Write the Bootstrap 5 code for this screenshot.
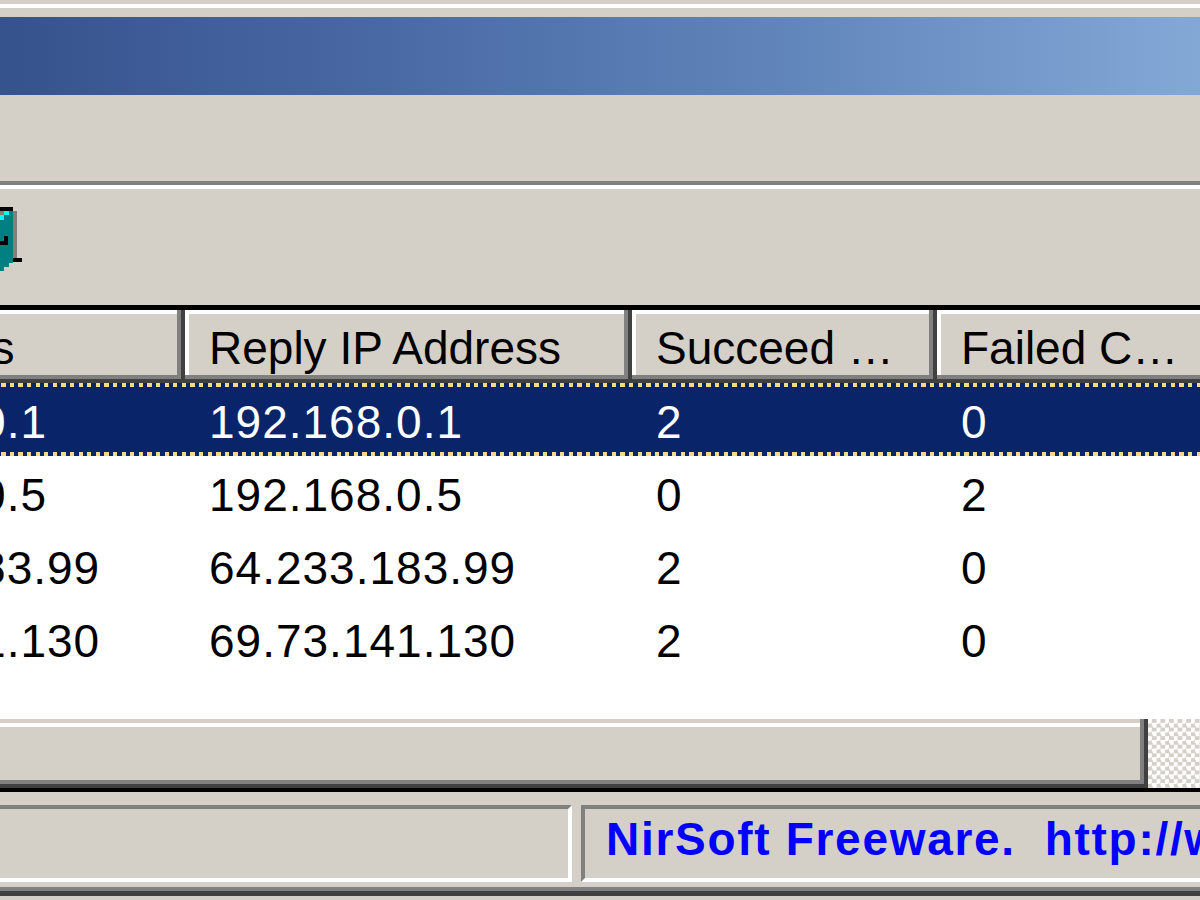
<!DOCTYPE html>
<html lang="en">
<head>
<meta charset="utf-8">
<title>NirSoft</title>
<link href="https://cdn.jsdelivr.net/npm/bootstrap@5.3.0/dist/css/bootstrap.min.css" rel="stylesheet">
<style>
html,body{height:900px;overflow:hidden;margin:0;background:#d4d0c8;}
body{font-family:"Liberation Sans",Arial,sans-serif;color:#000;}
.frame-top{height:17px;border-top:4px solid #d4d0c8;background:linear-gradient(#fff 0 4px,#d4d0c8 4px);}
.title-strip{height:78px;background:linear-gradient(90deg,#36528d 0%,#4a6aa5 33%,#6186bb 66%,#84a8d6 100%);}
.menu-strip{height:86px;background:#d4d0c8;}
.tool-strip{height:129px;background:#d4d0c8;border-top:4px solid #808080;box-shadow:inset 0 4px 0 #fff;border-bottom:5px solid #000;padding-top:22px;}
.tool-ico{display:block;width:22px;height:64px;}
.list-pane{height:409px;background:#fff;overflow:hidden;}
.ping-table{width:1448px;margin:0 0 0 -231px;table-layout:fixed;border-collapse:separate;border-spacing:0;font-size:46px;line-height:1;--bs-table-bg:transparent;--bs-table-color:#000;}
.ping-table>:not(caption)>*>*{padding:0 0 0 24px;border:0;white-space:nowrap;overflow:hidden;vertical-align:middle;box-shadow:none;color:#000;}
.ping-table>thead>tr>th{height:73px;background:#d4d0c8;font-weight:400;padding-top:2px;letter-spacing:0;box-shadow:inset -4px -4px 0 #404040,inset -8px -8px 0 #808080,inset 4px 4px 0 #fff;}
.ping-table>tbody>tr>td{height:73px;padding-top:4px;letter-spacing:1px;}
.row-picked{background-color:#0a246a;background-image:repeating-linear-gradient(90deg,#f6d78c 0 4.3px,#0a246a 4.3px 8.6px),repeating-linear-gradient(90deg,#f6d78c 0 4.3px,#0a246a 4.3px 8.6px);background-size:100% 4px,100% 4px;background-position:0 0,0 100%;background-repeat:no-repeat;}
.ping-table>tbody>.row-picked>td{color:#fff;}
.hscroll{height:69px;background:#fff;}
.hthumb{width:1148px;background:#d4d0c8;box-shadow:inset -4px -4px 0 #404040,inset -8px -8px 0 #808080,inset 0 4px 0 #d4d0c8,inset 0 8px 0 #fff;}
.hcheck{flex:1;background-color:#fff;background-image:conic-gradient(#d4d0c8 25%,#fff 0 50%,#d4d0c8 0 75%,#fff 0);background-size:8.6px 8.6px;}
.status-wrap{height:108px;background:#d4d0c8;border-top:4px solid #000;padding-top:13px;gap:9px;box-shadow:inset 0 -5px 0 #404040,inset 0 -9px 0 #808080;}
.stat-a,.stat-b{height:77px;background:#d4d0c8;border-top:4px solid #808080;border-bottom:4px solid #fff;}
.stat-a{width:572px;border-right:4px solid #fff;}
.stat-b{flex:1;border-left:4px solid #808080;padding-left:21px;overflow:hidden;white-space:nowrap;color:#0000ff;font-weight:700;font-size:46px;line-height:61px;letter-spacing:1.7px;}
</style>
</head>
<body>
<div class="d-flex flex-column">
  <div class="frame-top"></div>
  <div class="title-strip"></div>
  <div class="menu-strip"></div>
  <div class="tool-strip">
    <svg class="tool-ico" viewBox="0 0 22 64" shape-rendering="crispEdges" aria-hidden="true">
      <rect x="0" y="0" width="13" height="4" fill="#000"/>
      <rect x="0" y="4" width="13" height="52" fill="#008080"/>
      <rect x="0" y="56" width="9" height="4" fill="#008080"/>
      <rect x="0" y="60" width="4" height="4" fill="#008080"/>
      <rect x="13" y="4" width="4" height="47" fill="#808080"/>
      <rect x="13" y="51" width="9" height="4" fill="#000"/>
      <rect x="0" y="4" width="4" height="5" fill="#808080"/>
      <rect x="4" y="4" width="5" height="4" fill="#00ffff"/>
      <rect x="0" y="8" width="4" height="5" fill="#00ffff"/>
      <rect x="4" y="29" width="4" height="9" fill="#000"/>
      <rect x="0" y="34" width="8" height="4" fill="#000"/>
    </svg>
  </div>
  <div class="list-pane">
    <table class="table ping-table">
      <colgroup><col style="width:416px"><col style="width:447px"><col style="width:305px"><col style="width:280px"></colgroup>
      <thead>
        <tr><th>IP Address</th><th>Reply IP Address</th><th>Succeed …</th><th>Failed C…</th></tr>
      </thead>
      <tbody>
        <tr class="row-picked"><td>192.168.0.1</td><td>192.168.0.1</td><td>2</td><td>0</td></tr>
        <tr><td>192.168.0.5</td><td>192.168.0.5</td><td>0</td><td>2</td></tr>
        <tr><td>64.233.183.99</td><td>64.233.183.99</td><td>2</td><td>0</td></tr>
        <tr><td>69.73.141.130</td><td>69.73.141.130</td><td>2</td><td>0</td></tr>
      </tbody>
    </table>
  </div>
  <div class="hscroll d-flex"><div class="hthumb"></div><div class="hcheck"></div></div>
  <div class="status-wrap d-flex">
    <div class="stat-a"></div>
    <div class="stat-b">NirSoft Freeware.&nbsp; http://www.nirsoft.net</div>
  </div>
</div>
<script src="https://cdn.jsdelivr.net/npm/bootstrap@5.3.0/dist/js/bootstrap.bundle.min.js"></script>
</body>
</html>
